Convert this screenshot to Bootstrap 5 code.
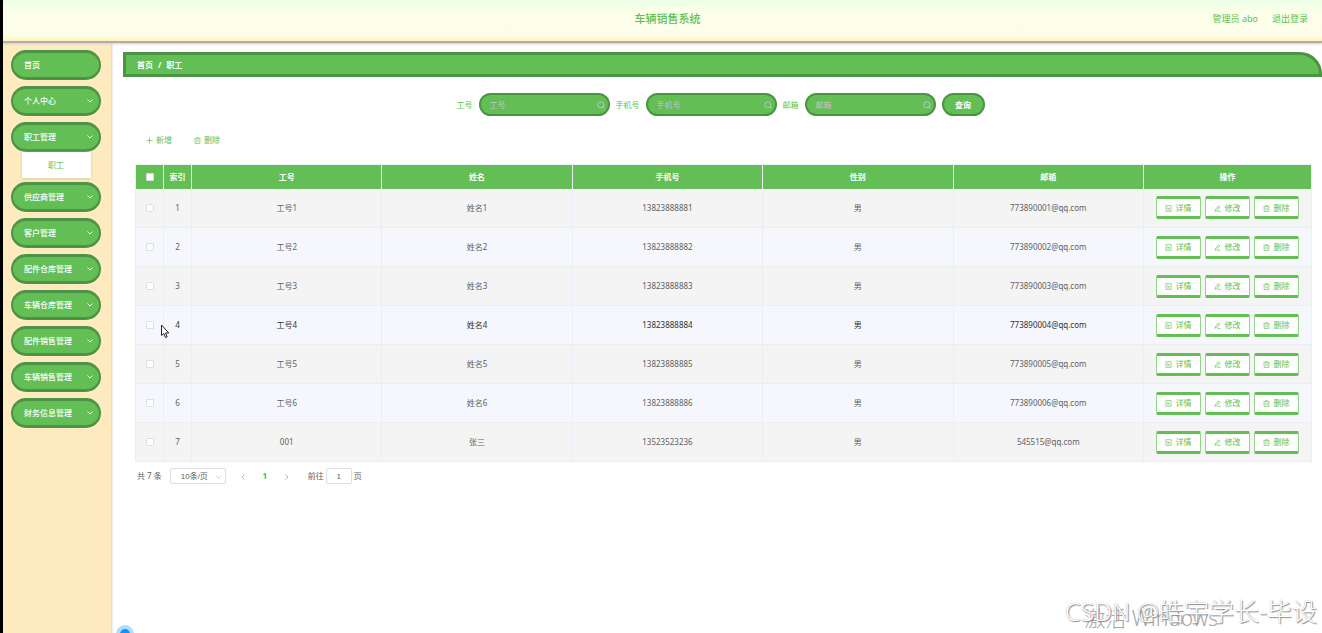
<!DOCTYPE html>
<html lang="zh-CN">
<head>
<meta charset="utf-8">
<meta name="viewport" content="width=device-width, initial-scale=1">
<title>车辆销售系统</title>
<link href="https://cdn.jsdelivr.net/npm/bootstrap@5.3.0/dist/css/bootstrap.min.css" rel="stylesheet">
<style>
:root { --leaf: #62be55; --leaf-dark: #4c9345; --line: #ebeef5; }
body { font: 8px/12px "Noto Sans", "Noto Sans CJK SC", sans-serif; color: #606266; border-left: 3px solid #000; overflow: hidden; }
svg { fill: none; stroke: currentColor; }
a { text-decoration: none; }
.topbar { height: 43px; padding: 0 14px 4px 24px; color: var(--leaf); background: linear-gradient(#ebfee6, #fcffe9 30%, #fcfde9 86%, #fff3bd); border-bottom: 2px solid #b0aeac; box-shadow: 0 1px 2px #ccc; z-index: 2; }
.topbar h1 { font-size: 11px; line-height: 16px; font-weight: 500; }
.topbar a { color: var(--leaf); font-size: 9px; }
.account { gap: 14px; }
.sidebar { width: 109px; padding: 7px 10px 0 8px; background: #ffebbf; border-right: 1px solid #dcdfe6; box-shadow: 1px 0 1px #eee; }
.menu-btn { height: 30px; padding: 0 5px 0 11px; border: 3px solid var(--leaf-dark); border-left-width: 2px; border-right-width: 2px; border-radius: 15px; background: var(--leaf); color: #fff; margin-bottom: 6px; font-size: 8px; font-weight: 500; }
.menu-btn.opened { margin-bottom: 0; }
.submenu { width: 69px; height: 26px; margin: 0 auto 4px; background: #fff; color: var(--leaf); box-shadow: 0 1px 3px #d8cba8; }
.crumbs { height: 25px; margin: 9px 0 16px 11px; padding-left: 11px; gap: 5px; background: var(--leaf); border: 3px solid var(--leaf-dark); border-top-right-radius: 22px; color: #fff; font-weight: 700; }
.crumbs a { color: #fff; }
.content-pad { padding: 0 10px 0 23px; }
.search { color: var(--leaf); gap: 6px; padding-right: 6px; }
.pill { height: 23px; border: 2px solid var(--leaf-dark); border-radius: 12px; background: var(--leaf); color: #fff; font-size: 8px; }
.pill input { width: 100%; min-width: 0; border: 0; outline: 0; background: none; color: #fff; padding: 0 0 0 9px; }
.pill input::placeholder { color: #c0c4cc; }
.search-box { width: 131px; padding-right: 3px; color: #c0c4cc; }
.search-btn { width: 43px; font-weight: 700; }
.tools { padding: 18px 11px; gap: 22px; }
.tool { border: 0; background: none; color: var(--leaf); padding: 0; gap: 3px; }
.staff { table-layout: fixed; width: 100%; text-align: center; border: 1px solid var(--line); margin-bottom: 6px; }
.staff th { height: 24px; background: var(--leaf); color: #fff; border-right: 1px solid var(--line); padding: 0; }
.staff th:last-child { border-right: 0; }
.staff td { height: 39px; padding: 0; border-right: 1px solid var(--line); border-bottom: 1px solid var(--line); background: #f4f4f4; }
.staff tbody tr:nth-child(even) td { background: #f5f7fc; }
.staff .hovered td { color: #303133; }
.c-narrow { width: 28px; }
.c-ops { width: 168px; }
.tick { appearance: none; display: block; width: 8px; height: 8px; margin: 0 auto; background: #fff; border: 1px solid #dcdfe6; border-radius: 1px; }
.op { width: 45px; height: 23px; padding: 0; border: 1px solid #93d38a; border-top: 3px solid var(--leaf); border-bottom: 3px solid var(--leaf); border-radius: 2px; background: #fff; color: var(--leaf); }
.op svg { margin-right: 1px; }
.pager { padding-left: 2px; height: 16px; }
.pager-select, .pager-input { height: 16px; border: 1px solid #dcdfe6; border-radius: 2px; background: #fff; color: #606266; font: 8px "Liberation Sans", "Noto Sans CJK SC", sans-serif; }
.pager-select { appearance: none; width: 56px; padding: 0 0 0 10px; }
.pager-input { width: 26px; text-align: center; padding: 0; margin: 0 2px; }
.select-arrow { right: 4px; top: 6px; color: #c0c4cc; pointer-events: none; }
.pager button { border: 0; background: none; padding: 0; width: 10px; color: #b5b8be; }
.pager .current { color: #18bc8c; font-weight: 700; }
.pointer { left: 158px; top: 324px; fill: #fff; stroke: #222; z-index: 3; }
.bubble { width: 18px; height: 18px; left: 113px; bottom: -10px; border: 4px solid #b0dcff; border-radius: 50%; background: #0a96ff; }
.activate { right: 104px; bottom: 3px; font-size: 21px; line-height: 24px; color: #a5a5a5; font-weight: 300; }
.csdn { right: 5px; bottom: 7px; font-size: 25px; line-height: 30px; color: #fff; font-weight: 300; text-shadow: 1px 1px 1px #888, 0 0 1px #aaa; z-index: 1; }
</style>
</head>
<body class="vh-100 d-flex flex-column position-relative">
<svg class="d-none">
  <symbol id="i-down" viewBox="0 0 8 8"><path d="M1.500 2.500 4 5l2.500-2.500"/></symbol>
  <symbol id="i-left" viewBox="0 0 8 8"><path d="M5.500 1.500 3 4l2.500 2.500"/></symbol>
  <symbol id="i-right" viewBox="0 0 8 8"><path d="M2.500 1.500 5 4 2.500 6.500"/></symbol>
  <symbol id="i-search" viewBox="0 0 8 8"><circle cx="3.800" cy="3.800" r="3"/><path d="m6 6 1.500 1.500"/></symbol>
  <symbol id="i-plus" viewBox="0 0 8 8"><path stroke-width=".8" d="M4 .5v7M.5 4h7"/></symbol>
  <symbol id="i-trash" viewBox="0 0 8 8"><path stroke-width=".7" d="M.5 2h7M2.800 2V.7h2.400V2M1.300 2v5.400h5.400V2M3.200 3.500v2.500M4.800 3.500v2.500"/></symbol>
  <symbol id="i-doc" viewBox="0 0 8 8"><path stroke-width=".7" d="M1 .7h6v6.600H1zM2.500 2.700h1.500M2.500 4h3M2.500 5.500h3"/></symbol>
  <symbol id="i-edit" viewBox="0 0 8 8"><path stroke-width=".8" d="M1.500 5.500 5 1l1.600 1.200-3.500 4.400-2 .5zM4 7.300h3.500"/></symbol>
</svg>

<header class="topbar flex-shrink-0 d-flex align-items-center position-relative">
  <div class="col"></div>
  <h1 class="m-0">车辆销售系统</h1>
  <div class="col d-flex justify-content-end account"><a href="#">管理员 abo</a><a href="#">退出登录</a></div>
</header>

<div class="d-flex flex-grow-1">
  <nav class="sidebar flex-shrink-0" aria-label="主菜单">
    <button class="menu-btn w-100 d-flex align-items-center justify-content-between">首页</button>
    <button class="menu-btn w-100 d-flex align-items-center justify-content-between">个人中心<svg width="8" height="8"><use href="#i-down"/></svg></button>
    <button class="menu-btn opened w-100 d-flex align-items-center justify-content-between">职工管理<svg width="8" height="8"><use href="#i-down"/></svg></button>
    <a href="#" class="submenu d-flex align-items-center justify-content-center">职工</a>
    <button class="menu-btn w-100 d-flex align-items-center justify-content-between">供应商管理<svg width="8" height="8"><use href="#i-down"/></svg></button>
    <button class="menu-btn w-100 d-flex align-items-center justify-content-between">客户管理<svg width="8" height="8"><use href="#i-down"/></svg></button>
    <button class="menu-btn w-100 d-flex align-items-center justify-content-between">配件仓库管理<svg width="8" height="8"><use href="#i-down"/></svg></button>
    <button class="menu-btn w-100 d-flex align-items-center justify-content-between">车辆仓库管理<svg width="8" height="8"><use href="#i-down"/></svg></button>
    <button class="menu-btn w-100 d-flex align-items-center justify-content-between">配件销售管理<svg width="8" height="8"><use href="#i-down"/></svg></button>
    <button class="menu-btn w-100 d-flex align-items-center justify-content-between">车辆销售管理<svg width="8" height="8"><use href="#i-down"/></svg></button>
    <button class="menu-btn w-100 d-flex align-items-center justify-content-between">财务信息管理<svg width="8" height="8"><use href="#i-down"/></svg></button>
  </nav>

  <main class="flex-grow-1">
    <nav class="crumbs d-flex align-items-center" aria-label="路径"><a href="#">首页</a><span>/</span><span>职工</span></nav>
    <div class="content-pad">
      <form class="search d-flex justify-content-center align-items-center">
        <label for="q-no">工号</label>
        <div class="pill search-box d-flex align-items-center"><input id="q-no" type="text" placeholder="工号"><svg class="flex-shrink-0" width="8" height="8"><use href="#i-search"/></svg></div>
        <label for="q-tel">手机号</label>
        <div class="pill search-box d-flex align-items-center"><input id="q-tel" type="text" placeholder="手机号"><svg class="flex-shrink-0" width="8" height="8"><use href="#i-search"/></svg></div>
        <label for="q-mail">邮箱</label>
        <div class="pill search-box d-flex align-items-center"><input id="q-mail" type="text" placeholder="邮箱"><svg class="flex-shrink-0" width="8" height="8"><use href="#i-search"/></svg></div>
        <button type="button" class="pill search-btn p-0">查询</button>
      </form>
      <div class="tools d-flex">
        <button class="tool d-flex align-items-center"><svg width="7" height="7"><use href="#i-plus"/></svg>新增</button>
        <button class="tool d-flex align-items-center"><svg width="7" height="7"><use href="#i-trash"/></svg>删除</button>
      </div>
      <table class="staff">
        <colgroup><col class="c-narrow"><col class="c-narrow"><col><col><col><col><col><col class="c-ops"></colgroup>
        <thead><tr><th><input type="checkbox" class="tick" aria-label="全选"></th><th>索引</th><th>工号</th><th>姓名</th><th>手机号</th><th>性别</th><th>邮箱</th><th>操作</th></tr></thead>
        <tbody>
          <tr><td><input type="checkbox" class="tick" aria-label="选择 1"></td><td>1</td><td>工号1</td><td>姓名1</td><td>13823888881</td><td>男</td><td>773890001@qq.com</td><td><div class="d-flex justify-content-center gap-1"><button class="op"><svg width="7" height="7"><use href="#i-doc"/></svg> 详情</button><button class="op"><svg width="7" height="7"><use href="#i-edit"/></svg> 修改</button><button class="op"><svg width="7" height="7"><use href="#i-trash"/></svg> 删除</button></div></td></tr>
          <tr><td><input type="checkbox" class="tick" aria-label="选择 2"></td><td>2</td><td>工号2</td><td>姓名2</td><td>13823888882</td><td>男</td><td>773890002@qq.com</td><td><div class="d-flex justify-content-center gap-1"><button class="op"><svg width="7" height="7"><use href="#i-doc"/></svg> 详情</button><button class="op"><svg width="7" height="7"><use href="#i-edit"/></svg> 修改</button><button class="op"><svg width="7" height="7"><use href="#i-trash"/></svg> 删除</button></div></td></tr>
          <tr><td><input type="checkbox" class="tick" aria-label="选择 3"></td><td>3</td><td>工号3</td><td>姓名3</td><td>13823888883</td><td>男</td><td>773890003@qq.com</td><td><div class="d-flex justify-content-center gap-1"><button class="op"><svg width="7" height="7"><use href="#i-doc"/></svg> 详情</button><button class="op"><svg width="7" height="7"><use href="#i-edit"/></svg> 修改</button><button class="op"><svg width="7" height="7"><use href="#i-trash"/></svg> 删除</button></div></td></tr>
          <tr class="hovered"><td><input type="checkbox" class="tick" aria-label="选择 4"></td><td>4</td><td>工号4</td><td>姓名4</td><td>13823888884</td><td>男</td><td>773890004@qq.com</td><td><div class="d-flex justify-content-center gap-1"><button class="op"><svg width="7" height="7"><use href="#i-doc"/></svg> 详情</button><button class="op"><svg width="7" height="7"><use href="#i-edit"/></svg> 修改</button><button class="op"><svg width="7" height="7"><use href="#i-trash"/></svg> 删除</button></div></td></tr>
          <tr><td><input type="checkbox" class="tick" aria-label="选择 5"></td><td>5</td><td>工号5</td><td>姓名5</td><td>13823888885</td><td>男</td><td>773890005@qq.com</td><td><div class="d-flex justify-content-center gap-1"><button class="op"><svg width="7" height="7"><use href="#i-doc"/></svg> 详情</button><button class="op"><svg width="7" height="7"><use href="#i-edit"/></svg> 修改</button><button class="op"><svg width="7" height="7"><use href="#i-trash"/></svg> 删除</button></div></td></tr>
          <tr><td><input type="checkbox" class="tick" aria-label="选择 6"></td><td>6</td><td>工号6</td><td>姓名6</td><td>13823888886</td><td>男</td><td>773890006@qq.com</td><td><div class="d-flex justify-content-center gap-1"><button class="op"><svg width="7" height="7"><use href="#i-doc"/></svg> 详情</button><button class="op"><svg width="7" height="7"><use href="#i-edit"/></svg> 修改</button><button class="op"><svg width="7" height="7"><use href="#i-trash"/></svg> 删除</button></div></td></tr>
          <tr><td><input type="checkbox" class="tick" aria-label="选择 7"></td><td>7</td><td>001</td><td>张三</td><td>13523523236</td><td>男</td><td>545515@qq.com</td><td><div class="d-flex justify-content-center gap-1"><button class="op"><svg width="7" height="7"><use href="#i-doc"/></svg> 详情</button><button class="op"><svg width="7" height="7"><use href="#i-edit"/></svg> 修改</button><button class="op"><svg width="7" height="7"><use href="#i-trash"/></svg> 删除</button></div></td></tr>
        </tbody>
      </table>
      <div class="pager d-flex align-items-center">
        <span class="me-2">共 7 条</span>
        <div class="position-relative d-flex me-2"><select class="pager-select" aria-label="每页条数"><option>10条/页</option></select><svg class="select-arrow position-absolute" width="7" height="7"><use href="#i-down"/></svg></div>
        <div class="d-flex gap-2 mx-1">
          <button class="me-1" aria-label="上一页"><svg width="8" height="8"><use href="#i-left"/></svg></button>
          <button class="current">1</button>
          <button class="ms-1" aria-label="下一页"><svg width="8" height="8"><use href="#i-right"/></svg></button>
        </div>
        <label for="go" class="ms-2 ps-1">前往</label>
        <input id="go" class="pager-input" type="text" value="1"><span>页</span>
      </div>
    </div>
  </main>
</div>

<svg class="pointer position-absolute" width="9" height="15" viewBox="0 0 9 15"><path d="M.5 1v10.500l2.300-2 1.700 4 1.700-.7-1.700-3.800h3.300z"/></svg>
<div class="bubble position-absolute"></div>
<div class="activate position-absolute">激活 Windows</div>
<div class="csdn position-absolute">CSDN @皓宇学长-毕设</div>
<script src="https://cdn.jsdelivr.net/npm/bootstrap@5.3.0/dist/js/bootstrap.bundle.min.js"></script>
</body>
</html>
